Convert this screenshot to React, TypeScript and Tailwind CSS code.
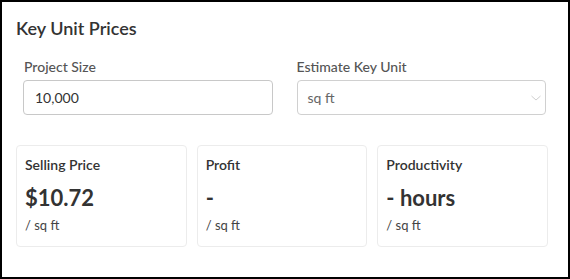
import React from "react";

const Card = ({ label, value }: { label: string; value: string }) => (
  <div className="flex-1 h-[102px] rounded-[4px] border border-[#ececec] bg-white px-2 pt-[10px]">
    <div className="text-[14px] leading-[18px] font-semibold text-[#333]">{label}</div>
    <div className="mt-[10px] text-[22px] leading-[28px] font-bold text-[#333]">{value}</div>
    <div className="mt-[5px] text-[13px] leading-[16px] text-[#444]">/ sq ft</div>
  </div>
);

export default function App() {
  return (
    <div
      className="w-[570px] h-[279px] border-2 border-black bg-white box-border"
      style={{ fontFamily: "Lato, 'Open Sans', sans-serif" }}
    >
      <div className="pl-[14px] pt-[15px] text-[18px] leading-[22px] font-semibold text-[#333]">
        Key Unit Prices
      </div>
      <div className="flex gap-[24px] pl-[21px] pr-[22px] mt-[19px]">
        <div className="flex-1">
          <div className="pl-[1px] text-[14px] leading-[18px] font-medium text-[#555]">Project Size</div>
          <div className="mt-[4px] h-[35px] rounded-[4px] border border-[#c8c8c8] flex items-center pl-[11px] text-[14px] text-[#333]">
            10,000
          </div>
        </div>
        <div className="flex-1">
          <div className="text-[14px] leading-[18px] font-medium text-[#555]">Estimate Key Unit</div>
          <div className="mt-[4px] h-[35px] rounded-[4px] border border-[#d0d0d0] flex items-center justify-between pl-[10px] pr-[3px] text-[14px] text-[#666]">
            <span>sq ft</span>
            <svg width="12" height="8" viewBox="0 0 12 8" fill="none">
              <path d="M1.5 2 L6 6 L10.5 2" stroke="#d0d0d0" strokeWidth="1" />
            </svg>
          </div>
        </div>
      </div>
      <div className="flex gap-[10px] pl-[14px] pr-[20px] mt-[30px]">
        <Card label="Selling Price" value="$10.72" />
        <Card label="Profit" value="-" />
        <Card label="Productivity" value="- hours" />
      </div>
    </div>
  );
}
